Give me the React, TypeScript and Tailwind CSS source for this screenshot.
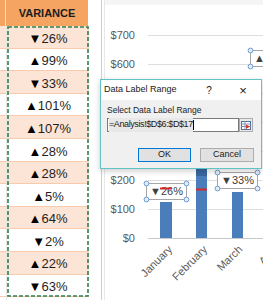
import React from "react";

const rows = ["▼26%", "▲99%", "▼33%", "▲101%", "▲107%", "▲28%", "▲28%", "▲5%", "▲64%", "▼2%", "▲22%", "▼63%"];

const gridLines = [
  { y: 35, label: "$700" },
  { y: 64, label: "$600" },
  { y: 93, label: "" },
  { y: 122, label: "" },
  { y: 151, label: "" },
  { y: 180, label: "$200" },
  { y: 209, label: "$100" },
  { y: 238, label: "$0" },
];

function Handle({ x, y }: { x: number; y: number }) {
  return <circle cx={x} cy={y} r={2.4} fill="#e3ecf7" stroke="#6d9bcf" strokeWidth={1} />;
}

function DataLabel({ x, y, w, h, text }: { x: number; y: number; w: number; h: number; text: string }) {
  return (
    <g>
      <rect x={x + 0.5} y={y + 0.5} width={w} height={h} fill="white" stroke="#a6a6a6" strokeWidth={1} />
      <text x={x + w / 2 + 0.5} y={y + h - 4} textAnchor="middle" fontSize={11} fill="#404040">
        {text}
      </text>
      <Handle x={x + 0.5} y={y + 0.5} />
      <Handle x={x + w + 0.5} y={y + 0.5} />
      <Handle x={x + 0.5} y={y + h + 0.5} />
      <Handle x={x + w + 0.5} y={y + h + 0.5} />
    </g>
  );
}

function Chart() {
  return (
    <svg width={162} height={300} className="block shrink-0" fontFamily="'Liberation Sans', Arial, sans-serif">
      <g transform="translate(-101 0)">
        <rect x={101} y={0} width={162} height={300} fill="white" />
        <rect x={104} y={0} width={159} height={5} fill="#f5f5f5" />
        <line x1={101.5} y1={0} x2={101.5} y2={300} stroke="#cfcfcf" />
        <line x1={104.5} y1={0} x2={104.5} y2={300} stroke="#e8e8e8" />

        {gridLines.map((g) => (
          <g key={g.y}>
            <line x1={148} y1={g.y + 0.5} x2={263} y2={g.y + 0.5} stroke={g.y === 238 ? "#c8c8c8" : "#dedede"} />
            {g.label && (
              <text x={135} y={g.y + 4} textAnchor="end" fontSize={11} fill="#595959">
                {g.label}
              </text>
            )}
          </g>
        ))}

        {/* bars */}
        <rect x={160} y={202} width={12} height={36} fill="#4a7ebb" />
        <rect x={196} y={110} width={11} height={128} fill="#4a7ebb" />
        <rect x={196} y={168} width={11} height={8} fill="#3a679e" />
        <rect x={232} y={192} width={11} height={46} fill="#4a7ebb" />

        <DataLabel x={146} y={183} w={40} h={16} text="▼26%" />
        <DataLabel x={217} y={172} w={40} h={16} text="▼33%" />
        <g>
          <rect x={250.5} y={50.5} width={30} height={16} fill="white" stroke="#a6a6a6" />
          <text x={254} y={62} fontSize={11} fill="#404040">▲</text>
          <Handle x={250.5} y={50.5} />
          <Handle x={250.5} y={66.5} />
        </g>

        {/* target markers */}
        <line x1={160} y1={188.5} x2={172} y2={188.5} stroke="#d62b2b" strokeWidth={2} />
        <line x1={196} y1={189.5} x2={207} y2={189.5} stroke="#d62b2b" strokeWidth={2} />

        {[
          { x: 173, label: "January" },
          { x: 208, label: "February" },
          { x: 243, label: "March" },
          { x: 279, label: "April" },
        ].map((c) => (
          <text
            key={c.label}
            x={c.x}
            y={250}
            textAnchor="end"
            fontSize={11}
            fill="#595959"
            transform={`rotate(-45 ${c.x} 250)`}
          >
            {c.label}
          </text>
        ))}
      </g>
    </svg>
  );
}

function RangeIcon() {
  return (
    <svg width={10} height={9} viewBox="0 0 10 9">
      <rect x={0.5} y={0.5} width={9} height={8} fill="#ffffff" stroke="#4f6f9a" />
      <line x1={0.5} y1={3} x2={9.5} y2={3} stroke="#7e97bb" />
      <line x1={0.5} y1={5.5} x2={9.5} y2={5.5} stroke="#7e97bb" />
      <line x1={4} y1={0.5} x2={4} y2={8.5} stroke="#7e97bb" />
      <path d="M5 3.5 L9 5.5 L5 8 Z" fill="#d9342b" />
    </svg>
  );
}

export default function App() {
  return (
    <div className="relative flex h-[300px] w-[263px] overflow-hidden bg-white font-['Liberation_Sans',Arial,sans-serif]">
      {/* spreadsheet column */}
      <div className="flex w-[101px] shrink-0 flex-col">
        <div className="flex h-[26px]">
          <div className="w-[6px] border-r border-[#fbd9c2] bg-[#f5a462]" />
          <div className="flex w-[82px] items-center justify-center bg-[#f5a462] pt-[1px] text-[11px] font-bold text-[#1c1c1c]">
            VARIANCE
          </div>
          <div className="flex-1 bg-white" />
        </div>
        <div className="flex flex-1">
          <div className="flex w-[7px] flex-col border-r border-[#e6e6e6]">
            {rows.map((r, i) => (
              <div
                key={i}
                className={`h-[22.6px] border-b border-[#f8cbad] ${i % 2 === 0 ? "bg-[#fce4d6]" : "bg-white"}`}
              />
            ))}
          </div>
          <div className="relative flex w-[82px] flex-col">
            {rows.map((r, i) => (
              <div
                key={i}
                className={`flex h-[22.6px] items-center justify-center border-b border-[#f8cbad] pt-[3px] text-[13px] text-[#1f1f1f] ${
                  i % 2 === 0 ? "bg-[#fce4d6]" : "bg-white"
                }`}
              >
                <span className="text-black">{r.slice(0, 1)}</span>
                <span>{r.slice(1)}</span>
              </div>
            ))}
            <svg className="pointer-events-none absolute inset-0" width={82} height={272}>
              <rect x={1} y={1} width={80} height={269} fill="none" stroke="#2f7f4f" strokeWidth={1.6} strokeDasharray="4 2" />
            </svg>
          </div>
          <div className="flex-1 bg-white" />
        </div>
      </div>

      <Chart />

      {/* Data Label Range dialog */}
      <div className="absolute left-[100px] top-[79px] flex h-[90px] w-[162px] flex-col border border-[#62c3c6] bg-[#f0f0f0] text-[#1a1a1a] shadow-[0_2px_6px_rgba(0,0,0,0.2)]">
        <div className="flex h-[20px] items-center bg-white pl-[3px] pr-[12px] text-[9px]">
          <span className="flex-1">Data Label Range</span>
          <span className="w-[10px] text-center text-[10px]">?</span>
          <span className="ml-[23px] w-[12px] text-center text-[13px] leading-none">×</span>
        </div>
        <div className="pl-[6px] pt-[5px] text-[8.5px] leading-[10px]">Select Data Label Range</div>
        <div className="mt-[3px] flex pl-[6px]">
          <div className="flex h-[14px] w-[132px] items-center border border-[#7a7a7a] bg-white px-[1px] text-[9px]">
            <span className="bg-[#e8e8e8] tracking-[-0.4px]">=Analysis!$D$6:$D$17</span>
            <span className="h-[10px] w-px bg-black" />
          </div>
          <div className="flex h-[14px] w-[14px] items-center justify-center border border-[#adadad] bg-[#e9e9e9]">
            <RangeIcon />
          </div>
        </div>
        <div className="mt-auto mb-[6px] flex justify-end gap-[9px] pr-[7px] text-[9px]">
          <div className="flex h-[14px] w-[53px] items-center justify-center border border-[#0078d7] bg-[#e1e1e1]">OK</div>
          <div className="flex h-[14px] w-[54px] items-center justify-center border border-[#adadad] bg-[#e1e1e1]">Cancel</div>
        </div>
      </div>
    </div>
  );
}
